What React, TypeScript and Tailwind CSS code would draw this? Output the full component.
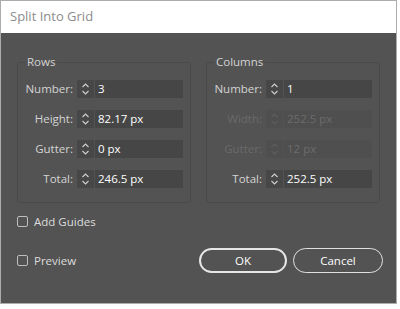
import React from 'react';

type Field = { label: string; value: string; disabled?: boolean };

const rows: Field[] = [
  { label: 'Number:', value: '3' },
  { label: 'Height:', value: '82.17 px' },
  { label: 'Gutter:', value: '0 px' },
  { label: 'Total:', value: '246.5 px' },
];

const columns: Field[] = [
  { label: 'Number:', value: '1' },
  { label: 'Width:', value: '252.5 px', disabled: true },
  { label: 'Gutter:', value: '12 px', disabled: true },
  { label: 'Total:', value: '252.5 px' },
];

function Spinner({ disabled }: { disabled?: boolean }) {
  const c = disabled ? '#5e5e5e' : '#d0d0d0';
  return (
    <svg width="9" height="14" viewBox="0 0 9 14" fill="none">
      <path d="M1.5 5L4.5 2L7.5 5" stroke={c} strokeWidth="1.1" />
      <path d="M1.5 9L4.5 12L7.5 9" stroke={c} strokeWidth="1.1" />
    </svg>
  );
}

function FieldRow({ field }: { field: Field }) {
  const dis = field.disabled;
  return (
    <div className="flex items-center h-[18px]">
      <div className={`w-[55px] text-right text-[11.5px] ${dis ? 'text-[#6a6a6a]' : 'text-[#d4d4d4]'}`}>
        {field.label}
      </div>
      <div
        className={`ml-[4px] w-[17px] h-[18px] flex items-center justify-center ${
          dis ? 'bg-[#4f4f4f]' : 'bg-[#474747]'
        }`}
      >
        <Spinner disabled={dis} />
      </div>
      <div
        className={`ml-px w-[88px] h-[18px] flex items-center px-[3px] text-[11.5px] ${
          dis ? 'bg-[#4f4f4f] text-[#6c6c6c]' : 'bg-[#464646] text-white'
        }`}
      >
        {field.value}
      </div>
    </div>
  );
}

function Group({ title, fields }: { title: string; fields: Field[] }) {
  return (
    <fieldset className="w-[174px] h-[148px] border border-[#4a4a4a] rounded-[3px] pt-[11px] flex flex-col gap-[12px]">
      <legend className="ml-[7px] px-[2px] text-[11.5px] text-[#d4d4d4] leading-[14px]">{title}</legend>
      {fields.map((f) => (
        <FieldRow key={f.label} field={f} />
      ))}
    </fieldset>
  );
}

function Checkbox({ label }: { label: string }) {
  return (
    <div className="flex items-center gap-[6px]">
      <div className="w-[11px] h-[11px] border border-[#bdbdbd] rounded-[2px]" />
      <span className="text-[11.5px] text-[#dcdcdc]">{label}</span>
    </div>
  );
}

export default function App() {
  return (
    <div className="w-[400px] h-[309px] bg-white" style={{ fontFamily: '"Open Sans", "Noto Sans", sans-serif' }}>
      <div className="w-[397px] h-[304px] border border-[#acacac] flex flex-col">
        <div className="h-[32px] bg-white flex items-center pl-[9px] text-[13px] text-[#8c8c8c]">
          Split Into Grid
        </div>
        <div className="flex-1 bg-[#535353] pl-[16px] pt-[22px]">
          <div className="flex gap-[15px]">
            <Group title="Rows" fields={rows} />
            <Group title="Columns" fields={columns} />
          </div>
          <div className="mt-[10px]">
            <Checkbox label="Add Guides" />
          </div>
          <div className="mt-[18px] flex items-center pr-[13px]">
            <Checkbox label="Preview" />
            <div className="ml-auto flex gap-[6px]">
              <button className="w-[88px] h-[25px] rounded-full border-2 border-[#e6e6e6] text-[11.5px] text-white">
                OK
              </button>
              <button className="w-[90px] h-[25px] rounded-full border border-[#e0e0e0] text-[11.5px] text-white">
                Cancel
              </button>
            </div>
          </div>
        </div>
      </div>
    </div>
  );
}
